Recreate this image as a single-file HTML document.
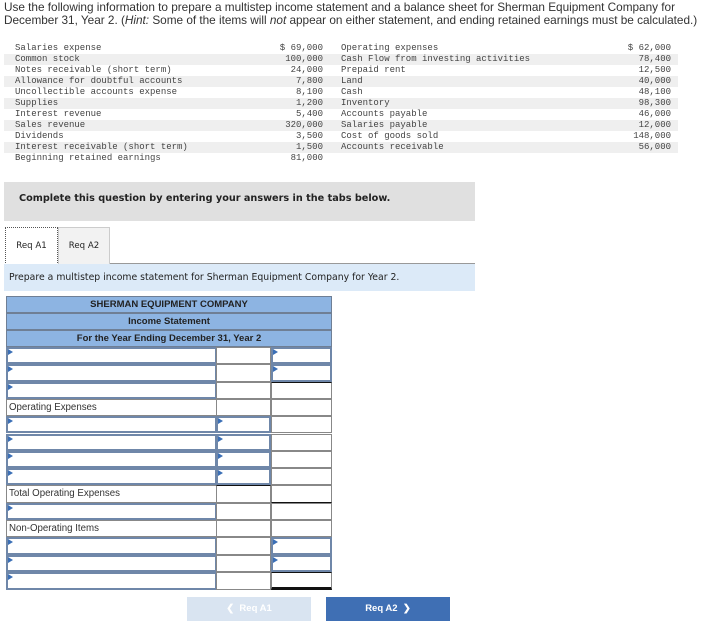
<!DOCTYPE html>
<html><head><meta charset="utf-8"><style>
*{margin:0;padding:0;box-sizing:border-box}
body{width:708px;height:640px;background:#fff;position:relative;font-family:"Liberation Sans",Arial,sans-serif;color:#222;overflow:hidden}
.a{position:absolute}
.intro{left:4px;top:1px;font-size:11.8px;line-height:13px;width:704px;color:#333;white-space:nowrap;letter-spacing:-0.02px}
.data{left:4px;top:43px;width:674px;font-family:"Liberation Mono",monospace;font-size:9px;color:#444}
.data .r{height:11px;line-height:11px;position:relative}
.data .r:nth-child(even){background:#efefef}
.data span{position:absolute;white-space:pre}
.gray{left:4px;top:182px;width:471px;height:39px;background:#e0e0e0;font-family:"DejaVu Sans",sans-serif;font-weight:bold;font-size:9.7px;line-height:33px;padding-left:15px;color:#222}
.tab{top:227px;height:37px;font-family:"DejaVu Sans",sans-serif;font-size:8.6px;line-height:37px;text-align:center;color:#222}
.instr{left:4px;top:264px;width:471px;height:27px;background:#dceaf8;font-family:"DejaVu Sans",sans-serif;font-size:9.3px;line-height:27px;padding-left:5px;color:#222}
.hdr{left:6px;width:326px;height:17px;background:#8db4e2;border:1px solid #6f7f95;font-size:9.5px;font-weight:bold;text-align:center;line-height:15px;color:#222}
.c{position:absolute;border:1px solid #888;background:#fff}
.i{border:2px solid #6f87a9}
.i:before{content:"";position:absolute;left:0;top:0;border-left:5px solid #3b6fb6;border-top:3px solid transparent;border-bottom:3px solid transparent}
.lab{font-size:9.7px;line-height:15px;padding-left:2px;color:#333}
.btn{top:597px;height:24px;font-size:9.5px;font-weight:bold;color:#fff;text-align:center;line-height:24px}
</style></head><body>
<div class="a intro">Use the following information to prepare a multistep income statement and a balance sheet for Sherman Equipment Company for<br>December 31, Year 2. (<i>Hint:</i> Some of the items will <i>not</i> appear on either statement, and ending retained earnings must be calculated.)</div>
<div class="a data">
<div class="r"><span style="left:11px">Salaries expense</span><span style="right:355px">$ 69,000</span><span style="left:337px">Operating expenses</span><span style="right:7px">$ 62,000</span></div>
<div class="r"><span style="left:11px">Common stock</span><span style="right:355px">100,000</span><span style="left:337px">Cash Flow from investing activities</span><span style="right:7px">78,400</span></div>
<div class="r"><span style="left:11px">Notes receivable (short term)</span><span style="right:355px">24,000</span><span style="left:337px">Prepaid rent</span><span style="right:7px">12,500</span></div>
<div class="r"><span style="left:11px">Allowance for doubtful accounts</span><span style="right:355px">7,800</span><span style="left:337px">Land</span><span style="right:7px">40,000</span></div>
<div class="r"><span style="left:11px">Uncollectible accounts expense</span><span style="right:355px">8,100</span><span style="left:337px">Cash</span><span style="right:7px">48,100</span></div>
<div class="r"><span style="left:11px">Supplies</span><span style="right:355px">1,200</span><span style="left:337px">Inventory</span><span style="right:7px">98,300</span></div>
<div class="r"><span style="left:11px">Interest revenue</span><span style="right:355px">5,400</span><span style="left:337px">Accounts payable</span><span style="right:7px">46,000</span></div>
<div class="r"><span style="left:11px">Sales revenue</span><span style="right:355px">320,000</span><span style="left:337px">Salaries payable</span><span style="right:7px">12,000</span></div>
<div class="r"><span style="left:11px">Dividends</span><span style="right:355px">3,500</span><span style="left:337px">Cost of goods sold</span><span style="right:7px">148,000</span></div>
<div class="r"><span style="left:11px">Interest receivable (short term)</span><span style="right:355px">1,500</span><span style="left:337px">Accounts receivable</span><span style="right:7px">56,000</span></div>
<div class="r"><span style="left:11px">Beginning retained earnings</span><span style="right:355px">81,000</span></div>
</div>
<div class="a gray">Complete this question by entering your answers in the tabs below.</div>
<div class="a tab" style="left:5px;width:53px;background:#fff;border:1px dotted #555;border-bottom:none;height:38px">Req A1</div>
<div class="a tab" style="left:58px;width:52px;background:#f2f2f2;border:1px solid #ccc;border-bottom:none">Req A2</div>
<div class="a" style="left:110px;top:263px;width:365px;height:1px;background:#999"></div>
<div class="a instr">Prepare a multistep income statement for Sherman Equipment Company for Year 2.</div>
<div class="a hdr" style="top:296px">SHERMAN EQUIPMENT COMPANY</div>
<div class="a hdr" style="top:313px">Income Statement</div>
<div class="a hdr" style="top:330px">For the Year Ending December 31, Year 2</div>
<div id="t"></div>
<script>
var rows=[
['i','','i'],['i','','i'],['i','','t'],['L:Operating Expenses','',''],
['i','i',''],['i','i',''],['i','i',''],['i','i',''],
['L:Total Operating Expenses','t','b'],['i','',''],['L:Non-Operating Items','',''],
['i','','i'],['i','','i'],['i','','tb']];
var xs=[[6,211],[216,55],[271,61]],h='',y=347;
for(var r=0;r<14;r++){var hh=(r==13)?18:17.3;
for(var c=0;c<3;c++){var v=rows[r][c],st='left:'+xs[c][0]+'px;top:'+y.toFixed(1)+'px;width:'+xs[c][1]+'px;height:'+hh.toFixed(1)+'px;';
var cls='c';var txt='';
if(v=='i')cls+=' i';
else if(v.indexOf('L:')==0){cls+=' lab';txt=v.slice(2);}
else{if(v.indexOf('t')>=0)st+='border-top:1.5px solid #111;';if(v=='b')st+='border-bottom:1.5px solid #111;';if(v=='tb')st+='border-bottom:3px solid #111;';}
h+='<div class="'+cls+'" style="'+st+'">'+txt+'</div>';}
y+=17.3;}
document.getElementById('t').innerHTML=h;
</script>
<div class="a btn" style="left:187px;width:124px;background:#d9e4f1;color:#fff">&#10094;&nbsp; Req A1</div>
<div class="a btn" style="left:326px;width:124px;background:#3f6fb4">Req A2 &nbsp;&#10095;</div>
</body></html>
